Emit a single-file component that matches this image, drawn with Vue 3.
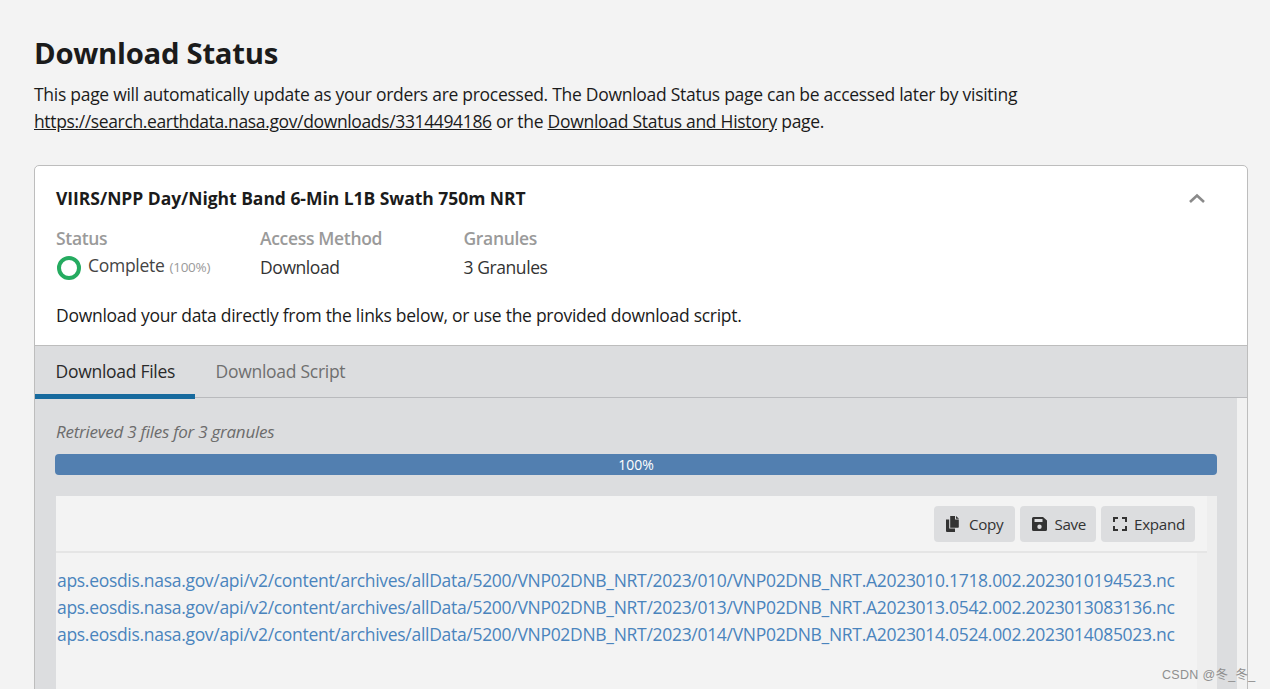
<script setup>
const links = [
  'aps.eosdis.nasa.gov/api/v2/content/archives/allData/5200/VNP02DNB_NRT/2023/010/VNP02DNB_NRT.A2023010.1718.002.2023010194523.nc',
  'aps.eosdis.nasa.gov/api/v2/content/archives/allData/5200/VNP02DNB_NRT/2023/013/VNP02DNB_NRT.A2023013.0542.002.2023013083136.nc',
  'aps.eosdis.nasa.gov/api/v2/content/archives/allData/5200/VNP02DNB_NRT/2023/014/VNP02DNB_NRT.A2023014.0524.002.2023014085023.nc'
]
</script>

<template>
  <main class="page">
    <h1 class="title">Download Status</h1>
    <p class="intro">
      This page will automatically update as your orders are processed. The Download Status page can be accessed later by visiting<br />
      <a class="ul url">https://search.earthdata.nasa.gov/downloads/3314494186</a> or the <a class="ul">Download Status and History</a> page.
    </p>

    <section class="card">
      <div class="head">
        <div class="name-row">
          <h2 class="name">VIIRS/NPP Day/Night Band 6-Min L1B Swath 750m NRT</h2>
          <svg class="chev" width="18" height="12" viewBox="0 0 18 12"><path d="M2 10 L9 3.500 L16 10" fill="none" stroke="#8a8a8a" stroke-width="2.600" /></svg>
        </div>
        <div class="meta">
          <div class="col c1">
            <div class="lbl">Status</div>
            <div class="val status">
              <span class="ring"></span>
              <span class="complete">Complete</span>
              <span class="pct">(100%)</span>
            </div>
          </div>
          <div class="col c2">
            <div class="lbl">Access Method</div>
            <div class="val">Download</div>
          </div>
          <div class="col">
            <div class="lbl">Granules</div>
            <div class="val">3 Granules</div>
          </div>
        </div>
        <p class="desc">Download your data directly from the links below, or use the provided download script.</p>
      </div>

      <div class="tabs">
        <div class="tab active">Download Files</div>
        <div class="tab">Download Script</div>
      </div>

      <div class="body">
        <div class="panel">
          <p class="retrieved">Retrieved 3 files for 3 granules</p>
          <div class="progress">100%</div>
          <div class="files">
            <div class="toolbar">
              <button class="btn copy">
                <svg width="14" height="16" viewBox="0 0 14 16"><path d="M0 3.500h3.200V12.500H9V16H1a1 1 0 0 1-1-1z M4.200 0H9v3.600h3.800V11a.8.8 0 0 1-.8.8H4.200z M10 0l3 2.700h-3z" fill="#333" /></svg>
                Copy
              </button>
              <button class="btn">
                <svg width="15" height="14" viewBox="0 0 15 14"><path fill-rule="evenodd" d="M1.500 0H11l4 3.600V12.500a1.500 1.500 0 0 1-1.500 1.500H1.500A1.500 1.500 0 0 1 0 12.500V1.500A1.500 1.500 0 0 1 1.500 0z M2.500 2v3h8V2z M7.500 7.500a2.200 2.200 0 1 0 0 4.400a2.200 2.200 0 0 0 0-4.400z" fill="#333" /></svg>
                Save
              </button>
              <button class="btn">
                <svg width="14" height="14" viewBox="0 0 14 14"><path d="M1 5V1h4 M9 1h4v4 M13 9v4H9 M5 13H1V9" fill="none" stroke="#333" stroke-width="2" /></svg>
                Expand
              </button>
            </div>
            <div class="links">
              <div v-for="l in links" :key="l" class="link">{{ l }}</div>
            </div>
          </div>
        </div>
      </div>
    </section>
    <div class="mark">CSDN @冬_冬_</div>
  </main>
</template>

<style>
html, body { margin: 0; height: 100%; overflow: hidden; background: #f3f3f3; }
</style>

<style scoped>
.page {
  box-sizing: border-box;
  height: 689px;
  overflow: hidden;
  padding: 34px 22px 0 34px;
  font-family: "Open Sans", "Noto Sans", sans-serif;
  color: #1b1b1b;
  font-size: 17.500px;
  letter-spacing: -0.28px;
  background: #f3f3f3;
}
.title { margin: 0 0 9px; font-size: 29.300px; line-height: 38px; font-weight: 700; }
.intro { margin: 0 0 30px; line-height: 27px; }
.ul { text-decoration: underline; }
.url { letter-spacing: -0.36px; }
.card {
  border: 1px solid #bdbdbd;
  border-radius: 5px 5px 0 0;
  background: #fff;
}
.head { padding: 18px 21px 0; }
.name-row { display: flex; justify-content: space-between; align-items: center; padding-right: 20px; }
.name { margin: 0; font-size: 17.500px; line-height: 28px; font-weight: 700; letter-spacing: -0.04px; }
.meta { display: flex; margin-top: 14px; }
.col { display: flex; flex-direction: column; }
.c1 { width: 204px; }
.c2 { width: 203.500px; }
.lbl { color: #9a9a9a; font-weight: 600; line-height: 25px; letter-spacing: -0.33px; }
.val { color: #333; line-height: 33px; letter-spacing: -0.42px; }
.status { display: flex; align-items: center; letter-spacing: -0.28px; }
.ring { box-sizing: border-box; width: 24px; height: 24px; border: 4px solid #25ab60; border-radius: 50%; margin: 0 7px 0 1px; }
.complete { color: #444; line-height: 26px; margin-top: -5px; }
.pct { color: #9a9a9a; font-size: 13.500px; margin-left: 5px; }
.desc { margin: 17px 0 0; line-height: 28px; padding-bottom: 16px; }
.tabs {
  display: flex;
  height: 53px;
  box-sizing: border-box;
  background: #dcdddf;
  border-top: 1px solid #bdbdbd;
  border-bottom: 1px solid #b9babd;
}
.tab { padding: 0 20.500px; line-height: 50px; color: #6f6f6f; height: 53px; box-sizing: border-box; }
.tab.active { color: #2a2a2a; border-bottom: 5px solid #176a9e; padding-right: 20px; }
.body { background: #f1f1f1; padding-right: 10px; }
.panel { background: #dcdddf; padding: 20px 20px 0 21px; height: 300px; box-sizing: border-box; }
.retrieved { margin: 0 0 8px; font-style: italic; font-size: 17px; line-height: 28px; color: #6c6c6c; letter-spacing: -0.25px; }
.progress {
  height: 21px;
  margin-left: -1px;
  border-radius: 4px;
  background: #527fb0;
  color: #fff;
  font-size: 14px;
  line-height: 21px;
  text-align: center;
  letter-spacing: 0;
}
.files { margin-top: 21px; background: #eeeeee; height: 200px; overflow: hidden; }
.toolbar {
  display: flex;
  justify-content: flex-end;
  gap: 5px;
  height: 57px;
  box-sizing: border-box;
  padding: 10px 12px 0 0;
  margin-right: 10px;
  background: #f3f3f3;
  border-bottom: 2px solid #e5e5e5;
}
.btn {
  display: inline-flex;
  align-items: center;
  gap: 7px;
  height: 36px;
  padding: 0 10px 0 12px;
  border: 0;
  border-radius: 4px;
  background: #dcdddf;
  color: #333;
  font: inherit;
  font-size: 15.200px;
  letter-spacing: -0.3px;
}
.btn.copy { gap: 9px; padding-right: 12px; }
.links { padding: 14px 0 0 1px; margin-right: 20px; height: 143px; background: #f3f3f3; }
.link { color: #4a84bd; line-height: 27px; white-space: nowrap; letter-spacing: -0.3px; }
.mark {
  position: absolute;
  left: 1162px;
  top: 664px;
  color: #8f8f8f;
  font-family: "Liberation Sans", "Noto Sans CJK SC", sans-serif;
  font-size: 12.500px;
  letter-spacing: 0.3px;
}
</style>
